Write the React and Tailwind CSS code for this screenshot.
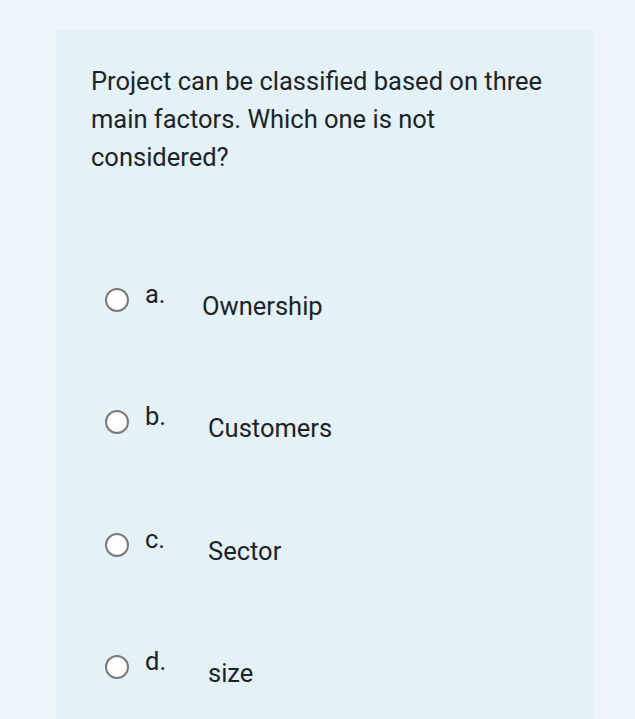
export default function App() {
  const options = [
    { label: 'a.', text: 'Ownership', labelWidth: 'w-[57px]', height: 'h-[122px]' },
    { label: 'b.', text: 'Customers', labelWidth: 'w-[63px]', height: 'h-[123px]' },
    { label: 'c.', text: 'Sector', labelWidth: 'w-[63px]', height: 'h-[122px]' },
    { label: 'd.', text: 'size', labelWidth: 'w-[63px]', height: 'h-[122px]' },
  ];

  return (
    <div className="min-h-[719px] bg-[#eef6fc] pt-[30px] pl-[56px] overflow-hidden" style={{ fontFamily: 'Roboto, "Noto Sans", sans-serif' }}>
      <div className="w-[538px] h-[689px] bg-[#e4f1f7] pt-[32px] pl-[35px]">
        {/* Question */}
        <p className="w-[470px] text-[25.5px] leading-[38px] text-[#1b2429]">
          Project can be classified based on three main factors. Which one is not considered?
        </p>

        {/* Answers */}
        <div className="mt-[103px]">
          {options.map((opt, index) => (
            <div key={index} className={`flex items-start ${opt.height}`}>
              <div className="ml-[14px] mt-[9px] w-[24px] h-[24px] rounded-full border-2 border-[#7a7a7a] bg-white shrink-0"></div>
              <span className={`ml-[16px] ${opt.labelWidth} text-[25.5px] leading-[30px] text-[#1b2429]`}>{opt.label}</span>
              <span className="mt-[12px] text-[25.5px] leading-[30px] text-[#1b2429]">{opt.text}</span>
            </div>
          ))}
        </div>
      </div>
    </div>
  );
}
